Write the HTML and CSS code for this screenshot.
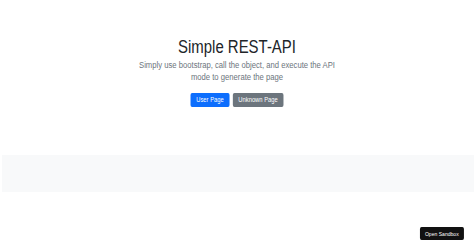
FILE: index.html
```html
<!DOCTYPE html>
<html>
<head>
<meta charset="utf-8">
<link rel="stylesheet" href="styles.css">
</head>
<body>
<main class="page">
  <section class="hero">
    <h1 class="title">Simple REST-API</h1>
    <p class="lead">Simply use bootstrap, call the object, and execute the API<br>mode to generate the page</p>
    <div class="actions">
      <a class="btn btn-primary">User Page</a>
      <a class="btn btn-secondary">Unknown Page</a>
    </div>
  </section>
  <section class="band"></section>
</main>
<a class="sandbox">Open Sandbox</a>
</body>
</html>
```
FILE: styles.css
```css
html, body { margin: 0; padding: 0; }
body {
  width: 474px;
  height: 248px;
  overflow: hidden;
  background: #fff;
  font-family: "Liberation Sans", Arial, Helvetica, sans-serif;
  color: #212529;
  position: relative;
}
.page { display: flex; flex-direction: column; }
.hero {
  display: flex;
  flex-direction: column;
  align-items: center;
  padding-top: 36px;
  height: 118px;
  box-sizing: border-box;
  transform: scaleX(0.83);
  transform-origin: 237px 0;
}
.title {
  margin: 0;
  font-size: 18px;
  font-weight: 400;
  line-height: 22px;
}
.lead {
  margin: 2px 0 0;
  text-align: center;
  font-size: 9.25px;
  line-height: 11.6px;
  color: #6c757d;
  white-space: nowrap;
}
.actions {
  display: flex;
  gap: 3.6px;
  margin-top: 10px;
}
.btn {
  display: inline-block;
  font-size: 7px;
  line-height: 14px;
  padding: 0 7px;
  border-radius: 2px;
  color: #fff;
}
.btn-primary { background: #0d6efd; }
.btn-secondary { background: #6c757d; }
.band {
  margin: 37px 0 0 2px;
  height: 37px;
  background: #f8f9fa;
}
.sandbox {
  position: absolute;
  right: 10px;
  bottom: 8px;
  background: #111;
  color: #fff;
  font-size: 6.1px;
  line-height: 13px;
  padding: 0 6px;
  border-radius: 2px;
  transform: scaleX(0.83);
  transform-origin: right center;
}
```
